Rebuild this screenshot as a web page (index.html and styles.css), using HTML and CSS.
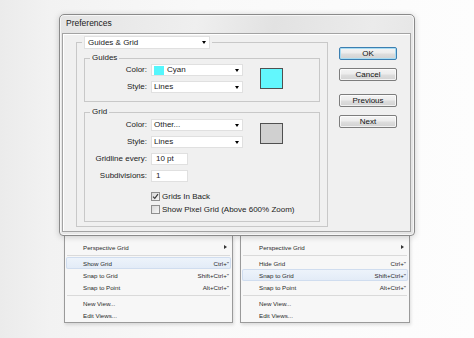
FILE: index.html
```html
<!DOCTYPE html>
<html>
<head>
<meta charset="utf-8">
<title>Preferences</title>
<link rel="stylesheet" href="styles.css">
</head>
<body>
<div class="stage">
  <div class="dialog">
    <div class="titlebar">Preferences</div>
    <div class="panel">
      <fieldset class="frame">
        <legend class="frame-legend">
          <div class="select legend-select"><span>Guides &amp; Grid</span><i class="arrow"></i></div>
        </legend>
        <fieldset class="group">
          <legend>Guides</legend>
          <div class="form">
            <label>Color:</label>
            <div class="select"><span class="chip"></span><span>Cyan</span><i class="arrow"></i></div>
            <div class="swatch cyan"></div>
            <label>Style:</label>
            <div class="select"><span>Lines</span><i class="arrow"></i></div>
          </div>
        </fieldset>
        <fieldset class="group grid-group">
          <legend>Grid</legend>
          <div class="form">
            <label>Color:</label>
            <div class="select"><span>Other...</span><i class="arrow"></i></div>
            <div class="swatch gray"></div>
            <label>Style:</label>
            <div class="select"><span>Lines</span><i class="arrow"></i></div>
            <label>Gridline every:</label>
            <div class="field">10 pt</div>
            <label>Subdivisions:</label>
            <div class="field">1</div>
            <div class="checks">
              <div class="check"><span class="box checked"><svg viewBox="0 0 7 7" width="7" height="7"><path d="M1 3.6 L2.8 5.4 L6 1.2" fill="none" stroke="#3a3a3a" stroke-width="1.2"/></svg></span><span>Grids In Back</span></div>
              <div class="check"><span class="box"></span><span>Show Pixel Grid (Above 600% Zoom)</span></div>
            </div>
          </div>
        </fieldset>
      </fieldset>
      <div class="buttons">
        <div class="btn default">OK</div>
        <div class="btn cancel">Cancel</div>
        <div class="btn prev">Previous</div>
        <div class="btn next">Next</div>
      </div>
    </div>
  </div>
  <div class="menus">
    <div class="menu">
      <div class="item"><span>Perspective Grid</span><i class="sub"></i></div>
      <div class="sep"></div>
      <div class="item hl"><span>Show Grid</span><span class="key">Ctrl+"</span></div>
      <div class="item"><span>Snap to Grid</span><span class="key">Shift+Ctrl+"</span></div>
      <div class="item"><span>Snap to Point</span><span class="key">Alt+Ctrl+"</span></div>
      <div class="sep"></div>
      <div class="item"><span>New View...</span></div>
      <div class="item"><span>Edit Views...</span></div>
    </div>
    <div class="menu wide">
      <div class="item"><span>Perspective Grid</span><i class="sub"></i></div>
      <div class="sep"></div>
      <div class="item"><span>Hide Grid</span><span class="key">Ctrl+"</span></div>
      <div class="item hl"><span>Snap to Grid</span><span class="key">Shift+Ctrl+"</span></div>
      <div class="item"><span>Snap to Point</span><span class="key">Alt+Ctrl+"</span></div>
      <div class="sep"></div>
      <div class="item"><span>New View...</span></div>
      <div class="item"><span>Edit Views...</span></div>
    </div>
  </div>
</div>
</body>
</html>
```
FILE: styles.css
```css
* { box-sizing: border-box; }
html, body { margin: 0; padding: 0; }
body {
  width: 474px;
  height: 338px;
  overflow: hidden;
  font-family: "Liberation Sans", Arial, sans-serif;
  font-size: 8px;
  color: #222;
  background: linear-gradient(90deg, #ebebeb 0px, #f2f2f2 50px, #f9f9f9 200px, #fdfdfd 474px);
}
.stage {
  display: flex;
  flex-direction: column;
  padding: 14px 0 0 59px;
}
.dialog {
  position: relative;
  z-index: 1;
  width: 356px;
  height: 222px;
  border: 1px solid #8a8a8a;
  border-radius: 5px 5px 4px 4px;
  background: linear-gradient(100deg, #e4e4e4 0%, #efefef 35%, #e2e2e2 55%, #ebebeb 80%, #e3e3e3 100%);
  box-shadow: 0 1px 6px rgba(0, 0, 0, 0.18), inset 0 0 0 1px rgba(255, 255, 255, 0.65);
  padding: 0 3px 3px 2px;
  display: flex;
  flex-direction: column;
}
.titlebar {
  height: 19px;
  line-height: 17px;
  padding-left: 4px;
  font-size: 8.5px;
  color: #1a1a1a;
}
.panel {
  flex: 1;
  display: flex;
  align-items: flex-start;
  border: 1px solid #a3a3a3;
  background: #f0f0f0;
  box-shadow: inset 1px 1px 0 #fff;
  padding: 2px 13px 4px 13px;
}
fieldset { margin: 0; min-width: 0; }
legend { font-weight: normal; }
.frame {
  flex: 0 0 252px;
  border: 1px solid #c8c8c8;
  padding: 4px 7px 4px 7px;
}
.frame-legend {
  padding: 0 2px;
  margin-left: -2px;
}
.group {
  border: 1px solid #c8c8c8;
  padding: 1px 4px 8px 4px;
}
.group legend {
  padding: 0 2px;
  margin-left: 1px;
  height: 10px;
  line-height: 10px;
}
.grid-group {
  margin-top: 5px;
  padding-top: 2px;
  padding-bottom: 5px;
}
.form {
  display: grid;
  grid-template-columns: 58px 92px 36px;
  grid-auto-rows: 12px;
  column-gap: 4px;
  row-gap: 5px;
}
.form label {
  text-align: right;
  line-height: 12px;
  white-space: nowrap;
  grid-column: 1;
}
.select {
  display: flex;
  align-items: center;
  height: 12px;
  background: #fff;
  border: 1px solid #e0e0e0;
  padding-left: 2px;
  line-height: 10px;
  white-space: nowrap;
}
.legend-select {
  width: 126px;
  height: 13px;
  padding-left: 3px;
}
.arrow {
  flex-shrink: 0;
  margin-left: auto;
  margin-right: 3px;
  width: 0;
  height: 0;
  border-left: 2.5px solid transparent;
  border-right: 2.5px solid transparent;
  border-top: 3px solid #000;
}
.chip {
  flex-shrink: 0;
  width: 10px;
  height: 9px;
  background: #55f6fc;
  margin-right: 3px;
}
.swatch {
  grid-column: 3;
  grid-row: 1 / span 2;
  justify-self: end;
  align-self: center;
  width: 23px;
  height: 21px;
  border: 1px solid #505050;
}
.swatch.cyan { background: #62f7fd; }
.swatch.gray { background: #d0d0d0; }
.field {
  width: 37px;
  height: 12px;
  background: #fff;
  border: 1px solid #e0e0e0;
  padding-left: 4px;
  line-height: 10px;
}
.checks {
  grid-column: 2 / span 2;
  grid-row: span 2;
  display: flex;
  flex-direction: column;
  gap: 1px;
  margin-top: 3px;
}
.check {
  display: flex;
  align-items: center;
  height: 12px;
  gap: 2px;
  white-space: nowrap;
}
.box {
  flex-shrink: 0;
  display: flex;
  align-items: center;
  justify-content: center;
  width: 9px;
  height: 9px;
  border: 1px solid #8e8e8e;
  background: linear-gradient(135deg, #d8d8d8, #f6f6f6);
}
.buttons {
  display: flex;
  flex-direction: column;
  width: 58px;
  margin-left: 11px;
  margin-top: 11px;
}
.btn {
  height: 13px;
  line-height: 11px;
  text-align: center;
  border: 1px solid #7d7d7d;
  border-radius: 2px;
  background: linear-gradient(#f4f4f4 0%, #ececec 48%, #dedede 52%, #d2d2d2 100%);
  box-shadow: inset 0 0 0 1px rgba(255, 255, 255, 0.7);
  color: #111;
}
.btn.default {
  border-color: #3c7fb1;
  box-shadow: inset 0 0 0 1px #a8dcf3;
}
.btn.cancel { margin-top: 8px; }
.btn.prev { margin-top: 13px; }
.btn.next { margin-top: 8px; }

.menus {
  display: flex;
  gap: 7px;
  padding-left: 5px;
}
.menu {
  width: 169px;
  background: #f7f7f7;
  border: 1px solid #9a9a9a;
  border-top: 0;
  padding: 5px 1px 1px 1px;
  box-shadow: 1px 2px 3px rgba(0, 0, 0, 0.12);
  font-size: 6.2px;
  color: #2a2a2a;
}
.menu.wide { width: 170px; }
.item {
  display: flex;
  align-items: center;
  height: 12px;
  padding: 0 2px 0 17px;
  white-space: nowrap;
}
.item.hl {
  background: linear-gradient(#eef4fb, #e2ebf7);
  box-shadow: inset 0 0 0 1px #d0ddef;
  border-radius: 2px;
}
.key { margin-left: auto; }
.sub {
  margin-left: auto;
  margin-right: 2px;
  width: 0;
  height: 0;
  border-left: 3px solid #333;
  border-top: 2px solid transparent;
  border-bottom: 2px solid transparent;
}
.sep {
  height: 4px;
  display: flex;
  align-items: center;
  padding: 0 1px;
}
.sep::after {
  content: "";
  flex: 1;
  height: 1px;
  background: #dadada;
}
```
